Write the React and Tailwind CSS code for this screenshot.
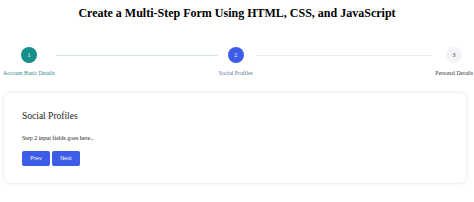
const steps = [
  { n: 1, label: 'Account Basic Details', state: 'done' },
  { n: 2, label: 'Social Profiles', state: 'active' },
  { n: 3, label: 'Personal Details', state: 'todo' },
];

function Step({ step }) {
  const circle =
    step.state === 'done'
      ? 'bg-[#168f8a] text-white'
      : step.state === 'active'
        ? 'bg-[#3d5ce8] text-white'
        : 'bg-[#f3f4f7] text-[#333]';
  const label =
    step.state === 'done' ? 'text-[#2f8a86]' : step.state === 'active' ? 'text-[#5b6f9a]' : 'text-[#333]';
  return (
    <div className="flex flex-col items-center">
      <div className={`w-[16px] h-[16px] rounded-full flex items-center justify-center text-[6px] ${circle}`}>
        {step.n}
      </div>
      <div className={`mt-[6px] text-[5.8px] leading-[8px] whitespace-nowrap ${label}`}>{step.label}</div>
    </div>
  );
}

export default function App() {
  return (
    <div className="w-[474px] h-[202px] bg-white overflow-hidden font-[family-name:Liberation_Serif,serif]">
      <h1 className="pt-[5px] text-center text-[12px] font-bold text-black leading-[16px]">
        Create a Multi-Step Form Using HTML, CSS, and JavaScript
      </h1>

      <div className="mt-[26px] pl-[3px] pr-[1px] flex items-start">
        <Step step={steps[0]} />
        <div className="w-[162px] h-px mt-[8px] mx-[1px] bg-[#cfe6e4]" />
        <Step step={steps[1]} />
        <div className="flex-1 h-px mt-[8px] mx-[3px] bg-[#eceef2]" />
        <Step step={steps[2]} />
      </div>

      <div className="mt-[15px] ml-[3px] w-[464px] h-[92px] rounded-[8px] border border-[#f1f1f1] shadow-[0_0_4px_rgba(0,0,0,0.06)] pl-[18px] pt-[17px]">
        <h2 className="text-[9.5px] text-[#222] leading-[12px]">Social Profiles</h2>
        <p className="mt-[12px] text-[6px] text-[#222] leading-[8px]">Step 2 input fields goes here..</p>
        <div className="mt-[9px] flex gap-[2px]">
          <button className="w-[28px] h-[15px] rounded-[2px] bg-[#3d5ce8] text-white text-[5.5px] font-[family-name:Liberation_Sans,sans-serif]">
            Prev
          </button>
          <button className="w-[28px] h-[15px] rounded-[2px] bg-[#3d5ce8] text-white text-[5.5px] font-[family-name:Liberation_Sans,sans-serif]">
            Next
          </button>
        </div>
      </div>
    </div>
  );
}
